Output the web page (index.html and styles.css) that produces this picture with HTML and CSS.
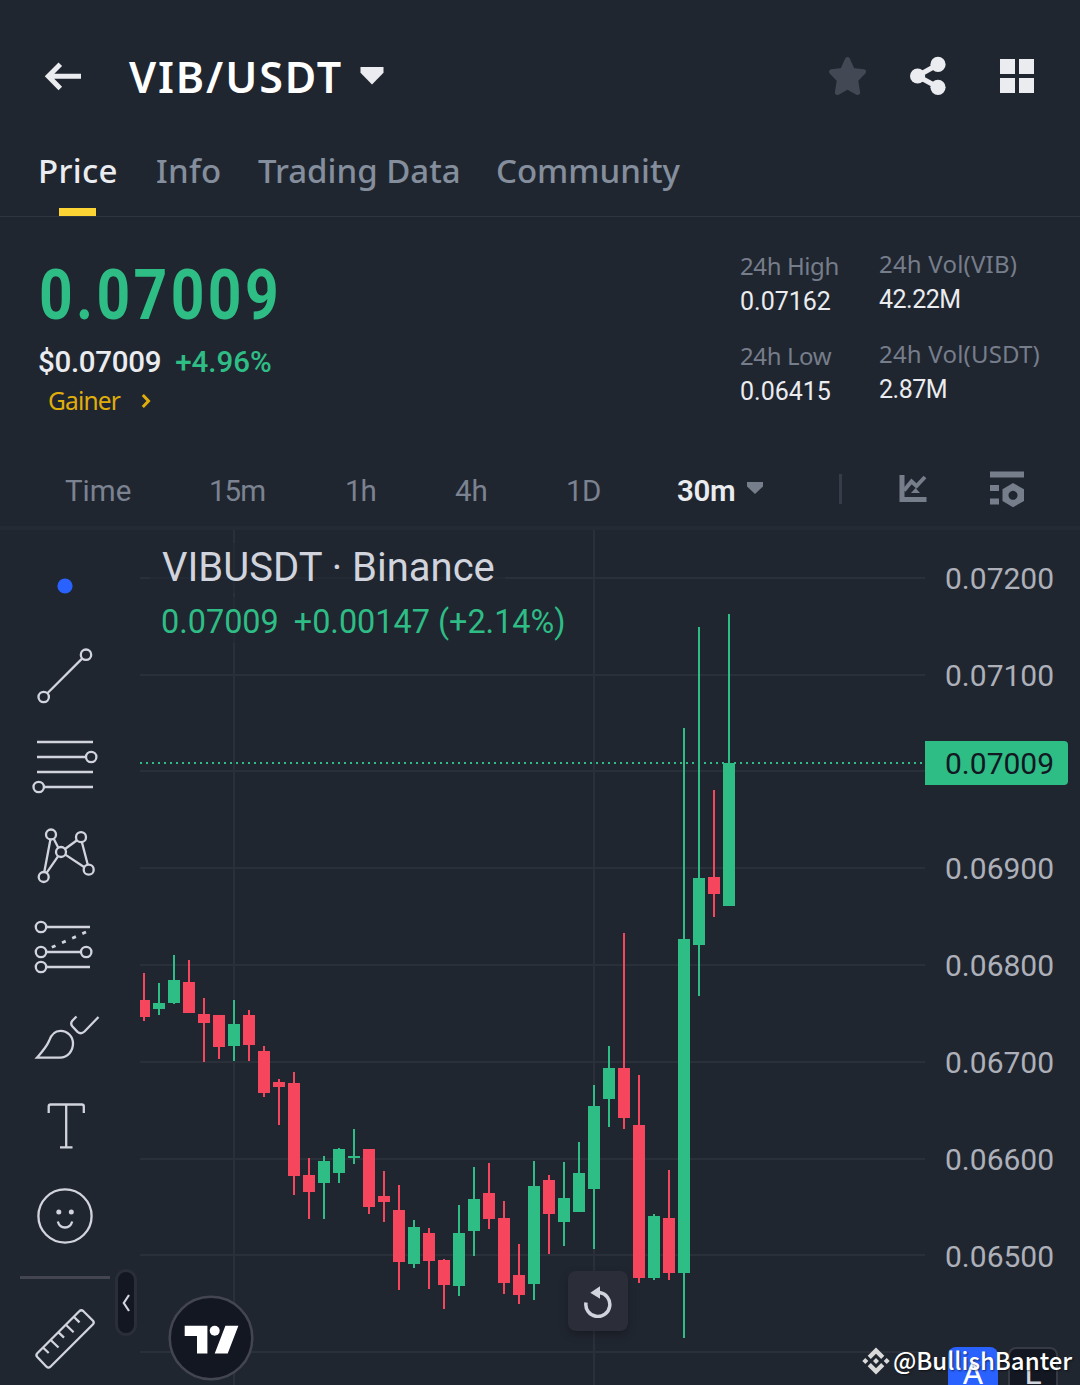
FILE: index.html
```html
<!DOCTYPE html>
<html lang="en">
<head>
<meta charset="utf-8">
<title>VIB/USDT</title>
<link rel="stylesheet" href="styles.css">
</head>
<body>
<div class="app">
  <header class="topbar">
    <svg class="back" width="40" height="32" viewBox="43 60 40 32"><path d="M60.3 64.2 48.3 76.3 60.3 88.4M48.3 76.3H81"/></svg>
    <h1 class="pair">VIB/USDT</h1>
    <svg class="pair-caret" width="24" height="18" viewBox="360 67 24 18"><path d="M360.500 67h23v5.700L372 84.500l-11.500-11.800z"/></svg>
    <div class="actions">
      <svg width="40" height="40" viewBox="827 56.500 40 40"><path class="star" d="M847.500 60 852.500 71 863.500 72.300 855.600 80.500 857.600 93 847.500 87.300 837.400 93 839.400 80.500 831.500 72.300 842.500 71z"/></svg>
      <svg width="40" height="40" viewBox="908 56 40 40"><path class="share-line" d="M938 64.500 917.400 76 938 87.300"/><g class="solid"><circle cx="938" cy="64.400" r="7.600"/><circle cx="917.600" cy="76" r="7.600"/><circle cx="938" cy="87.300" r="7.600"/></g></svg>
      <svg width="36" height="36" viewBox="999 58 36 36"><path class="solid" d="M1000 59h15v15h-15zM1019 59h15v15h-15zM1000 78h15v15h-15zM1019 78h15v15h-15z"/></svg>
    </div>
  </header>
  <nav class="tabs">
    <a class="tab tab-active">Price</a>
    <a class="tab tab-info">Info</a>
    <a class="tab tab-data">Trading Data</a>
    <a class="tab">Community</a>
  </nav>
  <section class="summary">
    <div class="quote">
      <div class="last">0.07009</div>
      <div class="fiat"><span>$0.07009</span><span class="change">+4.96%</span></div>
      <div class="badge"><span>Gainer</span><svg width="12" height="16" viewBox="140 393 12 16"><path d="M142.800 395 148.500 401 142.800 407"/></svg></div>
    </div>
    <dl class="stats stats-range">
      <dt>24h High</dt><dd>0.07162</dd>
      <dt>24h Low</dt><dd>0.06415</dd>
    </dl>
    <dl class="stats stats-volume">
      <dt>24h Vol(VIB)</dt><dd>42.22M</dd>
      <dt>24h Vol(USDT)</dt><dd>2.87M</dd>
    </dl>
  </section>
  <nav class="intervals">
    <a>Time</a><a>15m</a><a>1h</a><a>4h</a><a>1D</a>
    <a class="current"><span>30m</span><svg width="16" height="12" viewBox="747 482 16 12"><path d="M747 482h16v4.500l-8 7.500-8-7.500z"/></svg></a>
    <span class="divider"></span>
    <svg class="chart-icon" width="30" height="30" viewBox="898 473 30 30"><path class="axis-stroke" d="M902 475v24.500H926.500"/><path class="trend-stroke" d="M904 490.500 911.500 481.500 916.500 486 925 477"/><path class="fill" d="M911 493l4.500-5 4.500 5z"/></svg>
    <svg class="settings-icon" width="36" height="38" viewBox="989 470 36 38"><path class="fill" fill-rule="evenodd" d="M990 471.500h34v6h-34zM990 485h9v6h-9zM990 498.500h9v6h-9zM1013 483l11 6.200v11.800l-11 6.200-10.500-6.200v-11.800zM1013 490.800a4.500 4.500 0 1 0 .01 0z"/></svg>
  </nav>
  <main class="terminal">
    <aside class="tools">
      <svg viewBox="0 541 140 90"><circle class="dot" cx="65" cy="586" r="7.600"/></svg>
      <svg viewBox="0 631 140 90"><circle cx="86" cy="654.700" r="5.200"/><circle cx="43.700" cy="697" r="5.200"/><path d="M82.300 658.400 47.400 693.300"/></svg>
      <svg viewBox="0 721 140 90"><path d="M37 742H93M37 757H86M37 772H93M44 787H93"/><circle cx="91.200" cy="757" r="5.200"/><circle cx="38.700" cy="787" r="5.200"/></svg>
      <svg viewBox="0 811 140 90"><circle cx="51" cy="834.500" r="5"/><circle cx="81" cy="837.200" r="5"/><circle cx="61" cy="852" r="5"/><circle cx="43.700" cy="877" r="5"/><circle cx="88.700" cy="869.700" r="5"/><path d="M50.400 839.500 44.300 872M53.700 838.700 58.300 847.800M65 849 77 840.200M81.900 842.200 87.800 864.700M84.400 867.200 65.300 854.600M58.200 856.200 46.600 872.900"/></svg>
      <svg viewBox="0 901 140 90"><circle cx="41" cy="927" r="5.200"/><circle cx="41" cy="952" r="5.200"/><circle cx="86.200" cy="952" r="5.200"/><circle cx="41" cy="967" r="5.200"/><path d="M46.500 927H90M46.500 952H81M46.500 967H90"/><path class="dots" d="M51.800 947.300l3.700-1.600M62 942.700l3.700-1.600M72.200 938.200l3.700-1.600M82.300 933.600l3.700-1.600"/></svg>
      <svg viewBox="0 991 140 90"><path d="M37 1057.600H60C68 1057.600 73 1050.500 73 1043.500S67.500 1030.800 60.500 1030.800C54.500 1030.800 51 1035 49 1041 46.500 1047 42 1052 37 1057.600zM76.500 1016.500 72.300 1020.700Q70 1023.500 72.500 1026.500L77.500 1031.800Q81 1034.800 84.500 1031.500L98.500 1017"/></svg>
      <svg viewBox="0 1081 140 90"><path d="M48.700 1113V1106.500Q48.700 1104.500 50.700 1104.500H81.800Q83.800 1104.500 83.800 1106.500V1113M66.200 1104.500V1147.300M60 1147.300H72.500"/></svg>
      <svg viewBox="0 1171 140 90"><circle cx="65" cy="1216" r="26.600"/><path d="M57.800 1221.500C60 1229.500 70 1229.500 72.200 1221.500"/><circle class="eye" cx="58.800" cy="1212" r="2.500"/><circle class="eye" cx="71.300" cy="1212" r="2.500"/></svg>
      <hr>
      <svg viewBox="0 1294 140 90"><path d="M79.500 1311 37.300 1353.200Q35.500 1355 37.300 1357L46.500 1366.700Q48.500 1368.500 50.400 1366.700L93 1324.200Q94.500 1322.500 93 1320.700L83.200 1311Q81.300 1309.500 79.500 1311M43.500 1348 48.700 1353M51.200 1340.500 58.500 1347.500M58.800 1332.700 64 1337.700M66.400 1325.200 73.600 1332.200M74.300 1317.200 79.500 1322.400"/></svg>
    </aside>
    <div class="chart">
      <svg class="plot" width="785" height="855" viewBox="140 530 785 855">
        <path class="grid" d="M140 578H925M140 675H925M140 771H925M140 868H925M140 965H925M140 1062H925M140 1159H925M140 1255H925M140 1352H925M234 526V1385M594 526V1385"/>
        <rect class="legend-shade" x="150" y="543" width="355" height="50"/><rect class="legend-shade" x="150" y="597" width="427" height="46"/>
        <path class="price-line" d="M140 763H925"/>
        <path class="wick down" d="M144 973V1021M189 960V1013M204 998V1062M219 1015V1059M249 1010V1061M264 1046V1097M279 1079V1125M294 1072V1195M309 1158V1219M369 1149V1214M384 1171V1222M399 1185V1290M429 1228V1289M444 1259V1309M489 1163V1229M504 1201V1294M519 1244V1304M549 1175V1254M624 933V1129M639 1075V1283M669 1170V1280M714 790V917"/>
        <path class="wick up" d="M159 983V1015M174 955V1004M234 1000V1061M324 1156V1219M339 1148V1183M354 1129V1164M414 1220V1268M459 1205V1296M474 1167V1256M534 1161V1300M564 1162V1246M579 1142V1212M594 1085V1249M609 1046V1127M654 1214V1280M684 728V1338M699 627V996M729 614V906"/>
        <path class="candle down" d="M144 1000V1017M189 982V1013M204 1014V1023M219 1015V1047M249 1015V1045M264 1051V1093M279 1082V1087M294 1083V1176M309 1175V1192M369 1149V1207M384 1196V1202M399 1210V1262M429 1233V1261M444 1260V1285M489 1193V1219M504 1218V1283M519 1275V1295M549 1180V1214M624 1068V1118M639 1125V1278M669 1218V1273M714 877V894"/>
        <path class="candle up" d="M159 1003V1009M174 980V1003M234 1024V1046M324 1161V1183M339 1149V1173M354 1156V1158M414 1227V1264M459 1233V1286M474 1199V1231M534 1186V1284M564 1198V1222M579 1173V1212M594 1106V1189M609 1068V1099M654 1216V1278M684 939V1273M699 878V945M729 763V906"/>
      </svg>
      <div class="legend">
        <div class="symbol">VIBUSDT · Binance</div>
        <div class="values"><span>0.07009</span><span>+0.00147 (+2.14%)</span></div>
      </div>
      <svg class="tv-logo" width="86" height="86" viewBox="168.300 1295.300 86 86"><circle cx="211.300" cy="1338.300" r="41.300"/><path d="M185 1326h22.700v27.700h-10.400v-17.400H185zM225.700 1326h13l-10.700 27.700h-13z"/><circle class="tv-dot" cx="215" cy="1331" r="5"/></svg>
      <button class="reset"><svg width="30" height="34" viewBox="583 1284 30 34"><path class="arc" d="M586 1302.500A12 12 0 1 0 599.500 1292.600"/><path class="head" d="M590.300 1292.700 600 1286.300V1298.700z"/></svg></button>
      <button class="collapse"><svg width="10" height="20" viewBox="121 1292.500 10 20"><path d="M129 1294.500 123.800 1302.500 129 1310.500"/></svg></button>
    </div>
    <aside class="scale">
      <span>0.07200</span><span>0.07100</span><span class="last-tag">0.07009</span><span>0.06900</span><span>0.06800</span><span>0.06700</span><span>0.06600</span><span>0.06500</span>
      <div class="modes"><b class="auto">A</b><b class="log">L</b></div>
    </aside>
  </main>
  <div class="watermark">
    <svg width="28" height="28" viewBox="-14 -14 28 28"><path d="M0-13.500 8.300-5.200 5.200-2.100 0-7.300-5.200-2.100-8.300-5.200zM0 13.500 8.300 5.200 5.200 2.100 0 7.300-5.200 2.100-8.300 5.200zM0-3 3 0 0 3-3 0zM-10.700-3-7.700 0-10.700 3-13.700 0zM10.700-3 13.700 0 10.700 3 7.700 0z"/></svg>
    <span>@BullishBanter</span>
  </div>
</div>
</body>
</html>
```
FILE: styles.css
```css
* { box-sizing: border-box; }
body {
  margin: 0;
  background: #202630;
  color: #eaecef;
  font-family: Roboto, "Liberation Sans", sans-serif;
}
h1, dl, dd, dt { margin: 0; font-weight: 400; }
svg { display: block; flex: none; }
span, a, dt, dd { white-space: nowrap; }
button { border: 0; padding: 0; }

.app {
  position: relative;
  width: 1080px;
  height: 1385px;
  overflow: hidden;
}

/* Header */
.topbar {
  display: flex;
  align-items: center;
  height: 152px;
  padding: 0 45px 0 43px;
}
.back path { fill: none; stroke: #eaecef; stroke-width: 5; }
.pair {
  width: 231px;
  margin-left: 46px;
  padding-top: 2px;
  font: 600 43px/60px "Noto Sans", sans-serif;
  letter-spacing: 1.9px;
  color: #fff;
}
.pair-caret { fill: #eaecef; }
.actions {
  display: flex;
  align-items: center;
  margin-left: auto;
}
.actions svg + svg { margin-left: 41px; }
.actions svg:last-child { margin-left: 51px; }
.solid { fill: #eaecef; }
.star { fill: #434954; stroke: #434954; stroke-width: 5; stroke-linejoin: round; }
.share-line { fill: none; stroke: #eaecef; stroke-width: 5; }

/* Section tabs */
.tabs {
  display: flex;
  height: 65px;
  padding-left: 38px;
  border-bottom: 1px solid #2f3540;
  font: 500 33px/37px "Noto Sans", sans-serif;
  color: #848e9c;
}
.tab { width: 118px; }
.tab-info { width: 102px; letter-spacing: .3px; }
.tab-data { width: 238px; }
.tab-active {
  display: flex;
  flex-direction: column;
  justify-content: space-between;
  letter-spacing: .3px;
  color: #eaecef;
}
.tab-active::after {
  content: "";
  width: 37px;
  height: 8px;
  margin-left: 21px;
  background: #fcd535;
}

/* Price summary */
.summary {
  display: flex;
  height: 238px;
}
.quote { width: 740px; padding: 43px 0 0 38px; }
.last {
  width: 300px;
  font-size: 70px;
  font-weight: 700;
  line-height: 71px;
  letter-spacing: 4px;
  color: #2ebd85;
  transform: translateX(1px) scaleX(.84);
  transform-origin: left;
}
.fiat {
  display: flex;
  gap: 14px;
  margin-top: 11px;
  font-size: 29.5px;
  font-weight: 500;
  line-height: 40px;
  letter-spacing: -.3px;
}
.change { color: #2ebd85; letter-spacing: 0; }
.badge {
  display: flex;
  align-items: center;
  gap: 20px;
  padding-left: 10px;
  font: 24.5px/37px "Noto Sans", sans-serif;
  letter-spacing: -.8px;
  color: #e0ae0b;
}
.badge path { fill: none; stroke: #e0ae0b; stroke-width: 3; }
.stats { width: 139px; padding-top: 31px; }
.stats-volume { padding-top: 29px; }
.stats dt {
  font: 24px/35px "Noto Sans", sans-serif;
  letter-spacing: -.4px;
  color: #767d8b;
}
.stats dd {
  margin-bottom: 19px;
  padding-top: 1px;
  font-size: 25px;
  line-height: 35px;
}
.stats-volume dt { letter-spacing: .2px; }
.stats-volume dd { letter-spacing: -.5px; }

/* Interval picker */
.intervals {
  display: flex;
  align-items: center;
  height: 71px;
  padding-left: 65px;
  font-size: 29.5px;
  color: #7b8290;
}
.intervals a { width: 144px; }
.intervals a:nth-child(2) { width: 136px; letter-spacing: -1px; }
.intervals a:nth-child(3) { width: 110px; letter-spacing: -1px; }
.intervals a:nth-child(4) { width: 111px; }
.intervals a:nth-child(5) { width: 111px; letter-spacing: -.5px; }
.intervals .current {
  display: flex;
  align-items: center;
  justify-content: space-between;
  width: 86px;
  color: #eaecef;
  font-weight: 600;
  letter-spacing: -.4px;
}
.current svg { margin-top: -6px; fill: #767d8b; }
.divider {
  width: 3px;
  height: 30px;
  margin: -4px 0 0 76px;
  background: #363c48;
}
.chart-icon { margin: -5px 0 0 56px; }
.settings-icon { margin: -4px 0 0 60.5px; }
.axis-stroke, .trend-stroke { fill: none; stroke: #767d8b; stroke-width: 5; }
.trend-stroke { stroke-width: 4; }
.fill { fill: #767d8b; }

/* Chart terminal */
.terminal {
  display: grid;
  grid-template-columns: 140px 785px 155px;
  height: 859px;
  border-top: 4px solid #252b35;
}
.tools { padding-top: 11px; }
.tools svg {
  width: 140px;
  height: 90px;
  fill: none;
  stroke: #d1d4dc;
  stroke-width: 2.3;
}
.tools .dots { stroke-width: 2.8; }
.tools .dot { fill: #2962ff; stroke: none; }
.tools .eye { fill: #d1d4dc; stroke: none; }
.tools hr {
  width: 90px;
  height: 3px;
  margin: 15px 0 15px 20px;
  border: 0;
  background: #434651;
}
.chart { position: relative; }
.grid { stroke: #2a303a; stroke-width: 2; }
.legend-shade { fill: #202630; opacity: .6; }
.price-line { stroke: #2ebd85; stroke-width: 2; stroke-dasharray: 2 4; }
.wick { stroke-width: 2; }
.candle { stroke-width: 12; }
.up { stroke: #2ebd85; }
.down { stroke: #f6465d; }
.legend { position: absolute; left: 21px; top: 13px; }
.symbol {
  padding-left: 1px;
  font-size: 40px;
  line-height: 50px;
  color: #d1d4dc;
}
.values {
  display: flex;
  gap: 15px;
  font-size: 32.4px;
  line-height: 58px;
  color: #2ebd85;
}
.tv-logo { position: absolute; left: 28.3px; top: 765.3px; fill: #fff; }
.tv-logo circle { fill: #131722; stroke: #434651; stroke-width: 2.5; }
.tv-logo .tv-dot { fill: #fff; stroke: none; }
.reset {
  position: absolute;
  left: 428px;
  top: 741px;
  width: 60px;
  height: 60px;
  padding: 13px 15px;
  border-radius: 8px;
  background: #2b2d39;
  box-shadow: 0 4px 8px rgba(0, 0, 0, .25);
}
.reset .arc { fill: none; stroke: #d1d4dc; stroke-width: 3.5; }
.reset .head { fill: #d1d4dc; }
.collapse {
  position: absolute;
  left: -25px;
  top: 739px;
  width: 22px;
  height: 67px;
  padding-left: 3px;
  border: 3px solid #2a2e39;
  border-radius: 11px;
  background: #131722;
}
.collapse path { fill: none; stroke: #d1d4dc; stroke-width: 2.2; }

/* Price scale */
.scale {
  position: relative;
  display: flex;
  flex-direction: column;
  padding-top: 27px;
  font-size: 30px;
  color: #adb0b9;
}
.scale span {
  height: 44px;
  margin-bottom: 53px;
  padding-left: 20px;
  line-height: 44px;
}
.scale span:nth-child(2) { margin-bottom: 43px; }
.scale .last-tag {
  width: 143px;
  margin-bottom: 62px;
  border-radius: 0 4px 4px 0;
  background: #2ebd85;
  color: #131722;
  line-height: 46px;
}
.modes {
  display: flex;
  gap: 10px;
  margin: 15px 0 0 23px;
}
.modes b {
  width: 50px;
  height: 50px;
  border-radius: 8px;
  font-size: 32px;
  font-weight: 400;
  line-height: 53px;
  text-align: center;
}
.auto { background: #2962ff; color: #fff; }
.modes .log {
  border: 2px solid #363a45;
  background: #131722;
  color: #d1d4dc;
  line-height: 49px;
}

.watermark {
  position: absolute;
  left: 862px;
  top: 1345px;
  display: flex;
  align-items: center;
  gap: 3px;
  font: 500 24px/30px "Noto Sans CJK SC", sans-serif;
  color: #fff;
  text-shadow: 1px 1px 2px rgba(0, 0, 0, .6);
}
.watermark svg { margin-top: 2px; fill: #d9d9d9; }
```
